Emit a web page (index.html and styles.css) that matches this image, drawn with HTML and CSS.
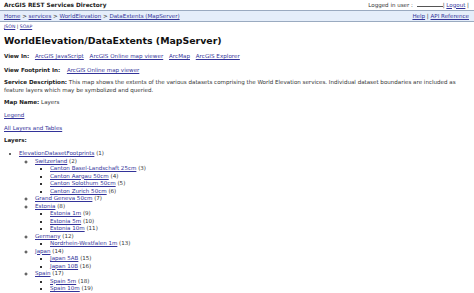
FILE: index.html
```html
<!DOCTYPE html>
<html lang="en">
<head>
    <meta charset="UTF-8">
    <title>DataExtents (MapServer)</title>
    <link rel="stylesheet" href="styles.css">
</head>
<body>
    <div class="topbar">
        <span class="app-title">ArcGIS REST Services Directory</span>
        <span class="user">Logged in user : <span class="blank"></span>| <a href="#">Logout</a> |</span>
    </div>
    <div class="navbar">
        <div class="crumbs"><a href="#">Home</a> &gt; <a href="#">services</a> &gt; <a href="#">WorldElevation</a> &gt; <a href="#">DataExtents (MapServer)</a></div>
        <div class="help"><a href="#">Help</a> | <a href="#">API Reference</a></div>
    </div>

    <div class="content">
        <div class="formats"><a href="#">JSON</a> | <a href="#">SOAP</a></div>
        <h2>WorldElevation/DataExtents (MapServer)</h2>

        <p class="view-in"><b>View In:</b> <a href="#">ArcGIS JavaScript</a> <a href="#">ArcGIS Online map viewer</a> <a href="#">ArcMap</a> <a href="#">ArcGIS Explorer</a></p>
        <p class="footprint"><b>View Footprint In:</b> <a href="#">ArcGIS Online map viewer</a></p>
        <p class="desc"><b>Service Description:</b> This map shows the extents of the various datasets comprising the World Elevation services. Individual dataset boundaries are included as feature layers which may be symbolized and queried.</p>
        <p class="map-name"><b>Map Name:</b> Layers</p>
        <p><a href="#">Legend</a></p>
        <p><a href="#">All Layers and Tables</a></p>
        <p class="layers-label"><b>Layers:</b></p>

        <ul class="layers">
            <li><a href="#">ElevationDatasetFootprints</a> (1)
                <ul>
                    <li><a href="#">Switzerland</a> (2)
                        <ul>
                            <li><a href="#">Canton Basel-Landschaft 25cm</a> (3)</li>
                            <li><a href="#">Canton Aargau 50cm</a> (4)</li>
                            <li><a href="#">Canton Solothurn 50cm</a> (5)</li>
                            <li><a href="#">Canton Zurich 50cm</a> (6)</li>
                        </ul>
                    </li>
                    <li><a href="#">Grand Geneva 50cm</a> (7)</li>
                    <li><a href="#">Estonia</a> (8)
                        <ul>
                            <li><a href="#">Estonia 1m</a> (9)</li>
                            <li><a href="#">Estonia 5m</a> (10)</li>
                            <li><a href="#">Estonia 10m</a> (11)</li>
                        </ul>
                    </li>
                    <li><a href="#">Germany</a> (12)
                        <ul>
                            <li><a href="#">Nordrhein-Westfalen 1m</a> (13)</li>
                        </ul>
                    </li>
                    <li><a href="#">Japan</a> (14)
                        <ul>
                            <li><a href="#">Japan 5AB</a> (15)</li>
                            <li><a href="#">Japan 10B</a> (16)</li>
                        </ul>
                    </li>
                    <li><a href="#">Spain</a> (17)
                        <ul>
                            <li><a href="#">Spain 5m</a> (18)</li>
                            <li><a href="#">Spain 10m</a> (19)</li>
                        </ul>
                    </li>
                </ul>
            </li>
        </ul>
    </div>
</body>
</html>
```

FILE: styles.css
```css
body {
    font-family: "DejaVu Sans", Verdana, sans-serif;
    font-size: 5.55px;
    line-height: 8px;
    color: #333;
    background: #fff;
    margin: 0;
    padding: 0;
}
a {
    color: #333399;
    text-decoration: underline;
}
.topbar {
    display: flex;
    justify-content: space-between;
    align-items: center;
    height: 9px;
    padding: 0 5px 0 4px;
}
.app-title {
    font-weight: bold;
    font-size: 5.8px;
    color: #222;
}
.blank {
    display: inline-block;
    width: 26px;
    height: 5px;
    border-bottom: 1px solid #555;
    margin-left: 2px;
    vertical-align: baseline;
}
.navbar {
    display: flex;
    justify-content: space-between;
    align-items: center;
    height: 10px;
    margin-top: 1px;
    padding: 0 5px 0 4px;
    background: #e5eefa;
    border-top: 1px solid #9aaac0;
    border-bottom: 1px solid #9aaac0;
}
.content {
    padding: 0 4px;
}
.formats {
    font-size: 4.6px;
    margin-top: 1px;
}
h2 {
    font-size: 9.4px;
    line-height: 12px;
    margin: 4px 0 0;
    color: #111;
}
p {
    margin: 5px 0 0;
}
p b {
    color: #222;
}
.view-in a {
    margin-left: 4px;
    letter-spacing: 0.05px;
}
.footprint a {
    margin-left: 5px;
}
.footprint {
    margin-top: 6px;
}
.desc,
.map-name,
.layers-label {
    margin-top: 4px;
}
.layers {
    margin: 6px 0 0;
    padding-left: 15px;
    line-height: 7.5px;
    list-style: disc;
}
.layers ul {
    margin: 0;
    padding-left: 16px;
}
.layers ul ul {
    padding-left: 15px;
    list-style: square;
}
```
